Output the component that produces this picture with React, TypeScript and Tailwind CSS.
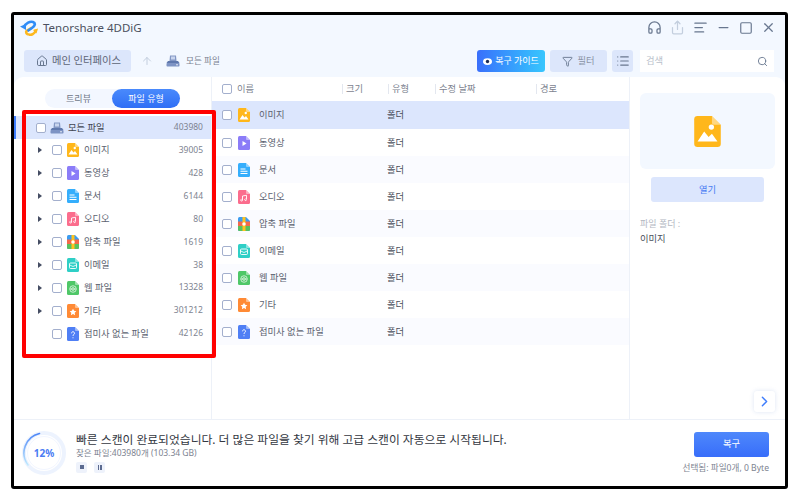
import { ArrowUp, AlignLeft, ChevronRight, Filter, Headphones, House, List, Minus, Search, Share, Square, X } from 'lucide-react';

type Kind = 'image' | 'video' | 'doc' | 'audio' | 'zip' | 'mail' | 'web' | 'other' | 'unknown';

const colors: Record<Kind, string> = {
    image: '#ffb71b',
    video: '#8b7cf8',
    doc: '#35aefc',
    audio: '#fb6d8d',
    zip: '#3b9cf0',
    mail: '#2fcfc6',
    web: '#4fc768',
    other: '#ff8a35',
    unknown: '#4f7ff5',
};

const files: { kind: Kind; name: string; count: string }[] = [
    { kind: 'image', name: '이미지', count: '39005' },
    { kind: 'video', name: '동영상', count: '428' },
    { kind: 'doc', name: '문서', count: '6144' },
    { kind: 'audio', name: '오디오', count: '80' },
    { kind: 'zip', name: '압축 파일', count: '1619' },
    { kind: 'mail', name: '이메일', count: '38' },
    { kind: 'web', name: '웹 파일', count: '13328' },
    { kind: 'other', name: '기타', count: '301212' },
    { kind: 'unknown', name: '접미사 없는 파일', count: '42126' },
];

function FileIcon({ kind, className }: { kind: Kind; className: string }) {
    return (
        <svg viewBox="0 0 24 28" className={className}>
            <path d="M3 0h13l8 8v17a3 3 0 0 1-3 3H3a3 3 0 0 1-3-3V3a3 3 0 0 1 3-3z" fill={colors[kind]} />
            {kind === 'zip' && (
                <>
                    <path d="M0 17h24v8a3 3 0 0 1-3 3H3a3 3 0 0 1-3-3z" fill="#58c05f" />
                    <path d="M0 9h24v9H0z" fill="#f4694b" />
                    <path d="M9 0h6v28H9z" fill="#ffc21f" />
                    <circle cx="12" cy="14" r="3.5" fill="#fff" />
                </>
            )}
            {kind !== 'zip' && <path d="M16 0l8 8h-6a2 2 0 0 1-2-2z" fill="#fff" opacity="0.45" />}
            {kind === 'image' && (
                <>
                    <circle cx="15.5" cy="10" r="2.4" fill="#fff" />
                    <path d="M3 23l6-9 4 5 3-3 5 7z" fill="#fff" />
                </>
            )}
            {kind === 'video' && <path d="M9 10l8 5-8 5z" fill="#fff" />}
            {kind === 'doc' && <path d="M5 11h10v2H5zM5 15.5h14v2H5zM5 20h14v2H5z" fill="#fff" />}
            {kind === 'audio' && (
                <path d="M9 20v-8l8-1.500v8M9 20a1.800 1.800 0 1 1-2-1.500M17 19a1.800 1.800 0 1 1-2-1.500" fill="none" stroke="#fff" strokeWidth="1.800" />
            )}
            {kind === 'mail' && (
                <>
                    <rect x="5" y="10" width="14" height="11" rx="2" fill="none" stroke="#fff" strokeWidth="1.800" />
                    <path d="M5.500 14l6.500 3 6.500-3" fill="none" stroke="#fff" strokeWidth="1.600" />
                </>
            )}
            {kind === 'web' && (
                <>
                    <circle cx="12" cy="16" r="6.500" fill="none" stroke="#fff" strokeWidth="1.500" opacity="0.9" />
                    <circle cx="12" cy="16" r="2.800" fill="none" stroke="#fff" strokeWidth="1.400" opacity="0.9" />
                    <path d="M5.500 16h13" stroke="#fff" strokeWidth="1.200" opacity="0.9" />
                </>
            )}
            {kind === 'other' && <path d="M12 9.500l2.100 4.200 4.600.7-3.300 3.300.8 4.600-4.200-2.200-4.200 2.200.8-4.600-3.300-3.300 4.600-.7z" fill="#fff" />}
            {kind === 'unknown' && (
                <>
                    <path d="M9 12.500a3 3 0 1 1 4.700 2.500c-1 .7-1.700 1.300-1.700 2.800" fill="none" stroke="#fff" strokeWidth="1.900" />
                    <circle cx="12" cy="21.500" r="1.200" fill="#fff" />
                </>
            )}
        </svg>
    );
}

function DriveIcon() {
    return (
        <svg viewBox="0 0 28 24" className="h-[12px] w-[14px] shrink-0">
            <path d="M8 1h12l1 11H7z" fill="#8397c4" />
            <path d="M10 3h8v6h-8z" fill="#c9d5ee" />
            <path d="M4 12h20l3 4H1z" fill="#5f78ad" />
            <rect x="1" y="16" width="26" height="7" rx="1.500" fill="#7d93c4" />
            <circle cx="22" cy="19.500" r="1.500" fill="#fff" />
        </svg>
    );
}

function Logo() {
    return (
        <svg viewBox="0 0 18 16" className="h-[16px] w-[18px] shrink-0">
            <path d="M8 14C11 16 15 14 16 9.500" fill="none" stroke="#fdb81e" strokeWidth="2.600" />
            <path d="M13 10l5-1.500-1.500 5z" fill="#fdb81e" />
            <path d="M8 14.500C5 13 6 11 8 10l4-2.500" fill="none" stroke="#fdb81e" strokeWidth="2.600" />
            <path d="M4 7C6 3 10 1 13 2c3 1 2 4-1 6l-4.500 3" fill="none" stroke="#2f8cf6" strokeWidth="2.600" />
            <path d="M0 6.500l6-2.500v6z" fill="#2f8cf6" />
        </svg>
    );
}

function Checkbox() {
    return <span className="h-[10px] w-[10px] shrink-0 rounded-[2px] border border-[#a3afcd] bg-white" />;
}

function ProgressRing() {
    return (
        <svg viewBox="0 0 44 44" className="h-[44px] w-[44px] shrink-0">
            <defs>
                <linearGradient id="arc" x1="0" y1="0" x2="0" y2="1">
                    <stop offset="0" stopColor="#4d86f7" />
                    <stop offset="1" stopColor="#bfeaff" />
                </linearGradient>
            </defs>
            <circle cx="22" cy="22" r="20" fill="none" stroke="#edf3fe" strokeWidth="4" />
            <circle cx="22" cy="22" r="16.500" fill="#fff" stroke="#f2f6ff" strokeWidth="1" />
            <path d="M17.500 2.500A20 20 0 0 0 6 34" fill="none" stroke="url(#arc)" strokeWidth="1.600" strokeLinecap="round" />
            <text x="22" y="26" textAnchor="middle" fontSize="10" fontWeight="700" fill="#4a7cf3">12%</text>
        </svg>
    );
}

export default function App() {
    return (
        <div className="relative h-[498px] w-[800px] bg-white pl-[11px] pt-[12px] font-['Noto_Sans','Noto_Sans_CJK_KR',sans-serif] text-[9.300px] text-[#4a4f5c]">
            <div className="flex h-[477px] w-[777px] flex-col rounded-[3px] border-[3px] border-black bg-[#f3f8ff]">
                {/* Title bar */}
                <div className="flex h-[35px] shrink-0 items-start justify-between pl-[6px] pr-[9px] pt-[4px]">
                    <div className="flex items-center gap-[5px]">
                        <Logo />
                        <span className="text-[11.500px] text-[#4c5160]">Tenorshare 4DDiG</span>
                    </div>
                    <div className="mt-[1px] flex items-center gap-[8px] text-[#68778f]">
                        <Headphones size={15} />
                        <Share size={15} className="text-[#c3cede]" />
                        <AlignLeft size={15} />
                        <Minus size={15} />
                        <Square size={14} />
                        <X size={15} />
                    </div>
                </div>

                {/* Toolbar */}
                <div className="flex h-[22px] shrink-0 items-stretch pl-[10px] pr-[11px]">
                    <div className="flex w-[107px] items-center gap-[4px] rounded-[3px] bg-[#dce6fb] pl-[12px] text-[10.300px] text-[#5c6475]">
                        <House size={12} className="text-[#68778f]" />
                        <span>메인 인터페이스</span>
                    </div>
                    <ArrowUp size={12} className="ml-[10px] self-center text-[#c3cede]" />
                    <div className="ml-[13px] flex items-center gap-[6px] text-[#7a8190]">
                        <DriveIcon />
                        <span className="text-[8.600px]">모든 파일</span>
                    </div>
                    <div className="ml-auto flex items-stretch gap-[5px]">
                        <div className="flex w-[68px] items-center justify-center gap-[3px] rounded-[3px] bg-gradient-to-r from-[#3a6ffb] to-[#38c6fd] text-[9px] text-white">
                            <svg viewBox="0 0 16 12" className="h-[7px] w-[9px]">
                                <ellipse cx="8" cy="6" rx="8" ry="6" fill="#fff" />
                                <circle cx="8" cy="6" r="3" fill="#1d2b52" />
                            </svg>
                            <span>복구 가이드</span>
                        </div>
                        <div className="flex w-[57px] items-center justify-center gap-[4px] rounded-[3px] bg-[#dce6fb] text-[#8a93a6]">
                            <Filter size={11} className="text-[#68778f]" />
                            <span>필터</span>
                        </div>
                        <div className="flex w-[21px] items-center justify-center rounded-[3px] bg-[#dce6fb] text-[#68778f]">
                            <List size={14} />
                        </div>
                        <div className="ml-[2px] flex w-[134px] items-center justify-between bg-white pl-[6px] pr-[6px] text-[#b9bfcb]">
                            <span>검색</span>
                            <Search size={11} className="text-[#68778f]" />
                        </div>
                    </div>
                </div>

                {/* Panels */}
                <div className="mt-[5px] flex h-[342px] shrink-0 overflow-hidden rounded-t-[9px] bg-white">
                    {/* File type tree */}
                    <div className="w-[198px] shrink-0 border-r border-[#edf1f8]">
                        <div className="ml-[31px] mt-[12px] flex h-[19px] w-[135px] items-center rounded-full bg-[#f3f7ff] text-[9px]">
                            <span className="w-[67px] text-center text-[#6f7686]">트리뷰</span>
                            <span className="flex h-full w-[68px] items-center justify-center rounded-full bg-gradient-to-b from-[#4a8afc] to-[#2f6ef5] text-white">파일 유형</span>
                        </div>
                        <div className="mt-[8px] flex h-[23px] items-center border-l-2 border-[#3f7dfc] bg-[#dce6fd] pl-[20px] pr-[8px]">
                            <Checkbox />
                            <span className="ml-[4px]"><DriveIcon /></span>
                            <span className="ml-[4px] text-[#3f4450]">모든 파일</span>
                            <span className="ml-auto text-[8.500px] text-[#7d8390]">403980</span>
                        </div>
                        {files.map((f) => (
                            <div key={f.kind} className="flex h-[22.900px] items-center pl-[24px] pr-[8px]">
                                {f.kind === 'unknown' ? (
                                    <span className="w-[14px] shrink-0" />
                                ) : (
                                    <span className="h-0 w-0 shrink-0 border-y-[3px] border-l-[4px] border-r-[10px] border-y-transparent border-l-[#454d63] border-r-transparent" />
                                )}
                                <Checkbox />
                                <FileIcon kind={f.kind} className="ml-[5px] h-[14px] w-[12px] shrink-0" />
                                <span className="ml-[5px] text-[#5c6270]">{f.name}</span>
                                <span className="ml-auto text-[8.500px] text-[#7d8390]">{f.count}</span>
                            </div>
                        ))}
                    </div>

                    {/* File list */}
                    <div className="w-[418px] shrink-0 border-r border-[#edf1f8]">
                        <div className="flex h-[24px] items-center pl-[10px] text-[#7d8390]">
                            <Checkbox />
                            <span className="ml-[5px] w-[105px]">이름</span>
                            <span className="w-[46px] border-l border-[#e3e7ef] pl-[3px] leading-[10px]">크기</span>
                            <span className="w-[47px] border-l border-[#e3e7ef] pl-[3px] leading-[10px]">유형</span>
                            <span className="w-[101px] border-l border-[#e3e7ef] pl-[3px] leading-[10px]">수정 날짜</span>
                            <span className="border-l border-[#e3e7ef] pl-[3px] leading-[10px]">경로</span>
                        </div>
                        {files.map((f, i) => (
                            <div key={f.kind} className={`flex items-center pl-[10px] ${i === 0 ? 'h-[28px] bg-[#dce6fd]' : i % 2 === 0 ? 'h-[27px] bg-[#fafbff]' : 'h-[27px] bg-white'}`}>
                                <Checkbox />
                                <FileIcon kind={f.kind} className="ml-[6px] h-[14px] w-[12px] shrink-0" />
                                <span className="ml-[9px] w-[128px] text-[#5c6270]">{f.name}</span>
                                <span className="text-[#4a4f5c]">폴더</span>
                            </div>
                        ))}
                    </div>

                    {/* Preview */}
                    <div className="relative min-w-0 flex-1 px-[10px] pt-[16px]">
                        <div className="flex h-[76px] w-[135px] items-center justify-center rounded-[6px] bg-[#f3f8ff]">
                            <FileIcon kind="image" className="h-[31px] w-[27px]" />
                        </div>
                        <div className="ml-[11px] mt-[8px] flex h-[25px] w-[113px] items-center justify-center rounded-[3px] bg-[#dce6fd] text-[#4a7cf3]">열기</div>
                        <div className="mt-[15px] text-[9px] text-[#b2b7c2]">파일 폴더 :</div>
                        <div className="mt-px text-[#4a4f5c]">이미지</div>
                        <div className="absolute bottom-[7px] right-[10px] flex h-[21px] w-[21px] items-center justify-center rounded-[3px] bg-white shadow-[0_0_4px_rgba(120,150,210,0.25)]">
                            <ChevronRight size={17} className="text-[#3f7dfc]" />
                        </div>
                    </div>
                </div>

                {/* Status bar */}
                <div className="flex min-h-0 flex-1 items-center border-t border-[#edf1f8] bg-white pl-[8px] pr-[16px]">
                    <ProgressRing />
                    <div className="mb-[2px] ml-[10px] flex flex-col">
                        <span className="text-[11.800px] leading-[15px] text-[#33373f]">빠른 스캔이 완료되었습니다. 더 많은 파일을 찾기 위해 고급 스캔이 자동으로 시작됩니다.</span>
                        <span className="text-[8.500px] leading-[12px] text-[#7d8390]">찾은 파일:403980개 (103.34 GB)</span>
                        <div className="mt-[3px] flex gap-[7px]">
                            <span className="flex h-[11px] w-[11px] items-center justify-center rounded-[2px] bg-[#eef2fb]">
                                <span className="h-[4px] w-[4px] bg-[#5c6b90]" />
                            </span>
                            <span className="flex h-[11px] w-[11px] items-center justify-center gap-[1px] rounded-[2px] bg-[#eef2fb]">
                                <span className="h-[5px] w-[1.500px] bg-[#5c6b90]" />
                                <span className="h-[5px] w-[1.500px] bg-[#5c6b90]" />
                            </span>
                        </div>
                    </div>
                    <div className="ml-auto flex flex-col items-end">
                        <div className="flex h-[25px] w-[75px] items-center justify-center rounded-[3px] bg-gradient-to-b from-[#4f88fb] to-[#386dfa] text-white">복구</div>
                        <span className="mt-[5px] text-[8.600px] text-[#7d8390]">선택됨: 파일0개, 0 Byte</span>
                    </div>
                </div>
            </div>

            {/* Red annotation box */}
            <div className="pointer-events-none absolute left-[22px] top-[110px] h-[248px] w-[194px] rounded-[2px] border-[4px] border-[#ff0000]" />
        </div>
    );
}
